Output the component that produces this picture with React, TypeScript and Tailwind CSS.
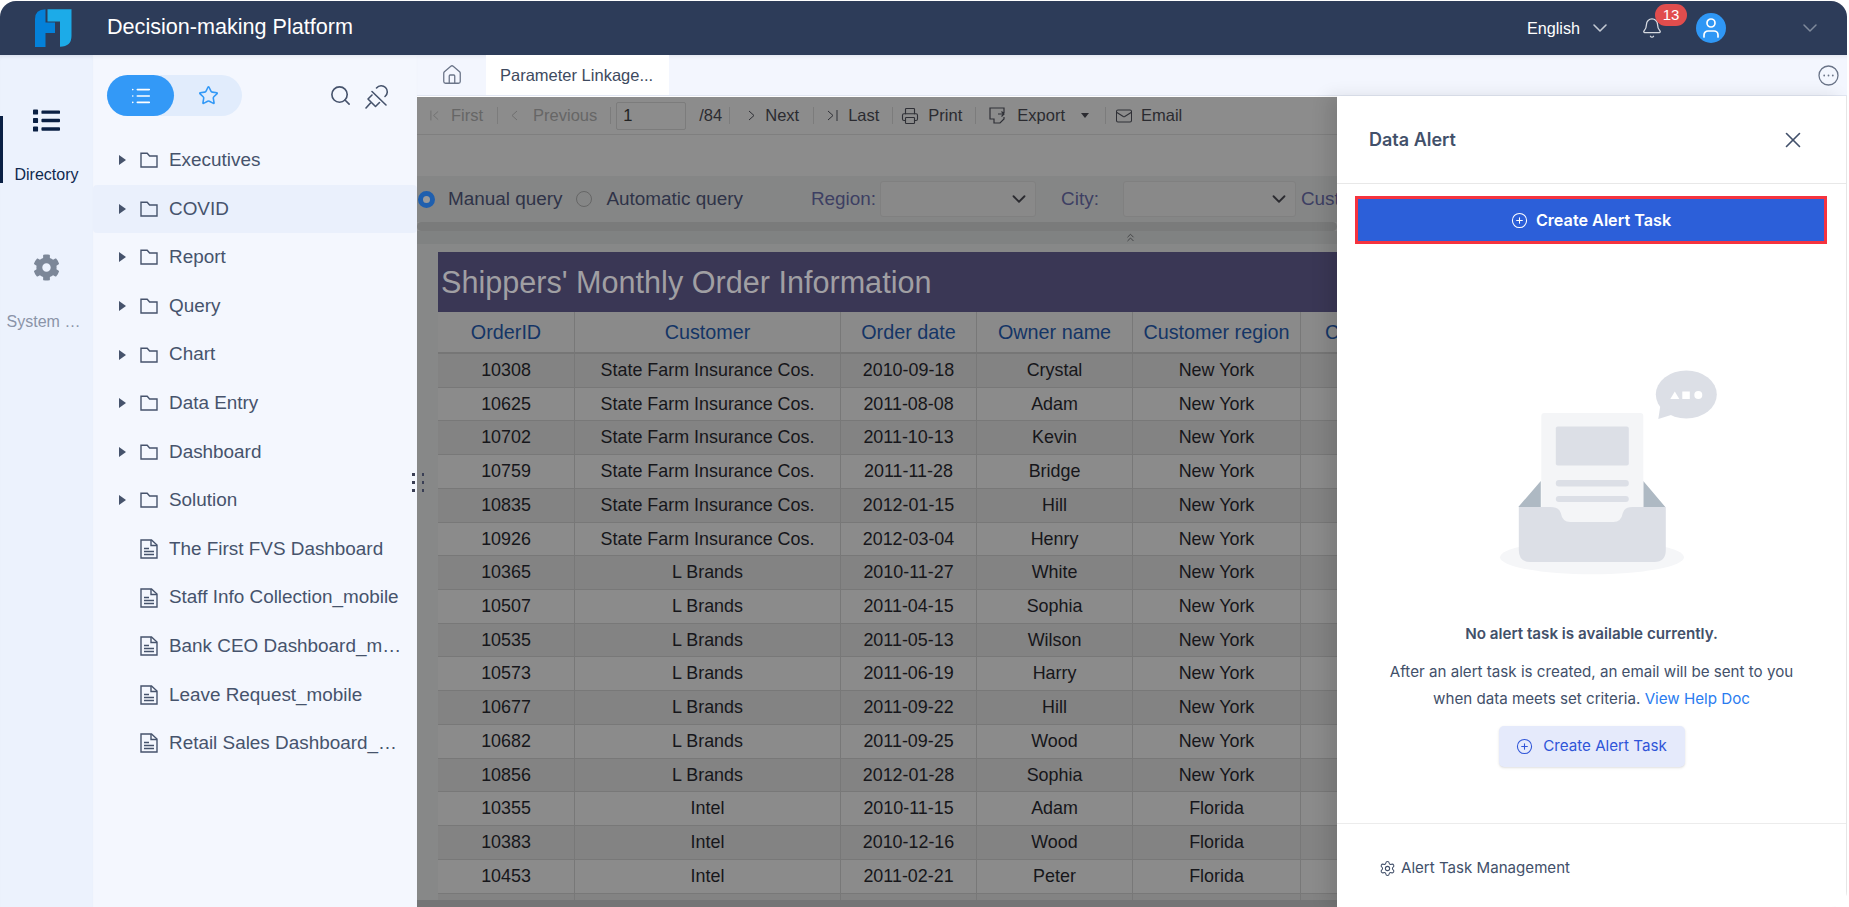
import { Bell, ChevronDown, ChevronsUp, CirclePlus, House, List, Mail, Printer, Search, Settings, Star, User, X } from "lucide-react"
import { FaCog, FaList } from "react-icons/fa"

const folders = ["Executives", "COVID", "Report", "Query", "Chart", "Data Entry", "Dashboard", "Solution"]
const files = ["The First FVS Dashboard", "Staff Info Collection_mobile", "Bank CEO Dashboard_mobile", "Leave Request_mobile", "Retail Sales Dashboard_mobile"]

const rows = [
  ["10308", "State Farm Insurance Cos.", "2010-09-18", "Crystal", "New York"],
  ["10625", "State Farm Insurance Cos.", "2011-08-08", "Adam", "New York"],
  ["10702", "State Farm Insurance Cos.", "2011-10-13", "Kevin", "New York"],
  ["10759", "State Farm Insurance Cos.", "2011-11-28", "Bridge", "New York"],
  ["10835", "State Farm Insurance Cos.", "2012-01-15", "Hill", "New York"],
  ["10926", "State Farm Insurance Cos.", "2012-03-04", "Henry", "New York"],
  ["10365", "L Brands", "2010-11-27", "White", "New York"],
  ["10507", "L Brands", "2011-04-15", "Sophia", "New York"],
  ["10535", "L Brands", "2011-05-13", "Wilson", "New York"],
  ["10573", "L Brands", "2011-06-19", "Harry", "New York"],
  ["10677", "L Brands", "2011-09-22", "Hill", "New York"],
  ["10682", "L Brands", "2011-09-25", "Wood", "New York"],
  ["10856", "L Brands", "2012-01-28", "Sophia", "New York"],
  ["10355", "Intel", "2010-11-15", "Adam", "Florida"],
  ["10383", "Intel", "2010-12-16", "Wood", "Florida"],
  ["10453", "Intel", "2011-02-21", "Peter", "Florida"],
  ["", "", "", "", ""],
]

const columns = "grid grid-cols-[137px_266px_136px_156px_168px_170px]"

function FolderIcon() {
  return (
    <svg width="18" height="16" viewBox="0 0 18 16" fill="none" stroke="#46536c" strokeWidth="1.4">
      <path d="M1 15V1.2H7.2L9.6 4H17V15Z" />
    </svg>
  )
}

function FileIcon() {
  return (
    <svg width="18" height="20" viewBox="0 0 18 20" fill="none" stroke="#46536c" strokeWidth="1.4">
      <path d="M1 19V1H11.5L17 6V19Z" />
      <path d="M11 1V6.5H17M4 9.5H9M4 12.5H14M4 15.5H14" />
    </svg>
  )
}

function Logo() {
  return (
    <svg width="37" height="38" viewBox="35 9 37 38">
      <path d="M35 47V19Q35 9.5 45.5 9.3V22.5H55V33H45.5V47Z" fill="#0481d9" />
      <path d="M47.5 9.3H71.5V36Q71.5 46.5 60 46.7V21.5H47.5Z" fill="#1cabe8" />
    </svg>
  )
}

function PinIcon() {
  return (
    <svg width="26" height="28" viewBox="4 4 26 28" fill="none" stroke="#46536c" strokeWidth="1.6" strokeLinecap="round" strokeLinejoin="round">
      <path d="M12 13.5L26 27" />
      <path d="M16.5 10C19 7 23 7 25.5 9.5C28 12 28 16 25 18.5" />
      <path d="M12 17L8 21L15.5 28.5L19.5 24.5" />
      <path d="M10.5 25L6 30" />
    </svg>
  )
}

function Illustration() {
  return (
    <svg width="260" height="205" viewBox="11.7 20 260 205">
      <ellipse cx="141.7" cy="207.3" rx="92" ry="17" fill="#f5f6f8" />
      <path d="M68 157L90.5 131V157ZM193 131L215 157H193Z" fill="#aeb9c3" />
      <rect x="91" y="63" width="102" height="115" rx="3" fill="#f4f5f7" />
      <rect x="105.5" y="76.5" width="73" height="39" rx="2" fill="#dcdfe6" />
      <rect x="105.5" y="130" width="73" height="6.5" rx="3" fill="#dcdfe6" />
      <rect x="105.5" y="146" width="73" height="6" rx="3" fill="#dcdfe6" />
      <path d="M68.5 157H100Q109 157 110.5 163Q112 172 120 172H163Q171 172 172.5 163Q174 157 182 157H215.5V200Q215.5 212 204 212H80Q68.5 212 68.5 200Z" fill="#dcdfe6" />
      <ellipse cx="236" cy="44.5" rx="30.5" ry="24" fill="#dcdfe6" />
      <path d="M210 56L208 69L224 64Z" fill="#dcdfe6" />
      <path d="M220 49H229L224.5 41.5Z" fill="#fff" />
      <rect x="232" y="41.5" width="7.5" height="7.5" fill="#fff" />
      <circle cx="248" cy="45" r="4" fill="#fff" />
    </svg>
  )
}

function Sep({ className }: { className: string }) {
  return <div className={`w-px h-[17px] bg-[#7c7c7c] shrink-0 ${className}`} />
}

function ExportIcon() {
  return (
    <svg width="16" height="17" viewBox="0 0 16 17" fill="none" stroke="#2f3036" strokeWidth="1.2">
      <path d="M15 6V1H1V12H5V16H11L15 12V10M5 12V16M9 7H15M12.5 4.5L15 7L12.5 9.5" />
    </svg>
  )
}

function Toolbar() {
  return (
    <div className="flex items-center h-[38px] shrink-0 border-b border-[#7f7f7f] text-[16.5px] whitespace-nowrap">
      <span className="ml-[13px] w-[9px] flex items-center">
        <svg width="10" height="11" viewBox="0 0 10 11" fill="none" stroke="#6f6f6f"><path d="M1 0V11M9 1L4 5.5L9 10" /></svg>
      </span>
      <span className="ml-[12px] text-[#666]">First</span>
      <Sep className="ml-[14px]" />
      <svg className="ml-[13px]" width="7" height="11" viewBox="0 0 7 11" fill="none" stroke="#6f6f6f"><path d="M6 1L1 5.5L6 10" /></svg>
      <span className="ml-[15px] text-[#666]">Previous</span>
      <Sep className="ml-[13px]" />
      <div className="ml-[5px] w-[70px] h-[28px] border border-[#7c7c7c] rounded-[2px] pl-[6px] flex items-center text-[#222]">1</div>
      <span className="ml-[13px] text-[#2b2b30]">/84</span>
      <Sep className="ml-[7px]" />
      <svg className="ml-[18px]" width="7" height="11" viewBox="0 0 7 11" fill="none" stroke="#2f3036"><path d="M1 1L6 5.5L1 10" /></svg>
      <span className="ml-[10px] text-[#2b2b30]">Next</span>
      <Sep className="ml-[14px]" />
      <svg className="ml-[13px]" width="11" height="11" viewBox="0 0 11 11" fill="none" stroke="#2f3036"><path d="M1 1L6 5.5L1 10M10 0V11" /></svg>
      <span className="ml-[10px] text-[#2b2b30]">Last</span>
      <Sep className="ml-[13px]" />
      <Printer className="ml-[8px]" size={18} strokeWidth={1.5} color="#2f3036" />
      <span className="ml-[9px] text-[#2b2b30]">Print</span>
      <Sep className="ml-[13px]" />
      <div className="ml-[13px] flex"><ExportIcon /></div>
      <span className="ml-[12px] text-[#2b2b30]">Export</span>
      <div className="ml-[16px] w-0 h-0 border-x-[4px] border-x-transparent border-t-[5px] border-t-[#2b2b30]" />
      <Sep className="ml-[16px]" />
      <Mail className="ml-[9px]" size={18} strokeWidth={1.4} color="#2f3036" />
      <span className="ml-[8px] text-[#2b2b30]">Email</span>
    </div>
  )
}

function ParamBar() {
  return (
    <div className="flex items-center h-[46px] shrink-0 mt-[41px] bg-[#858686] text-[18.9px] whitespace-nowrap">
      <div className="ml-px w-[17px] h-[17px] rounded-full border-[5px] border-[#1f5fae] bg-[#9a9a9a] shrink-0" />
      <span className="ml-[13px] text-[#2f3348]">Manual query</span>
      <div className="ml-[14px] w-[16px] h-[16px] rounded-full border border-[#666] shrink-0" />
      <span className="ml-[14px] text-[#2f3348]">Automatic query</span>
      <span className="ml-[68px] text-[#3d3f63]">Region:</span>
      <div className="ml-[4px] w-[156px] h-[36px] border border-[#808080] rounded-[3px] bg-[#898989] flex items-center justify-end pr-[5px] shrink-0">
        <ChevronDown size={22} strokeWidth={2} color="#2b2b30" />
      </div>
      <span className="ml-[25px] text-[#3d3f63]">City:</span>
      <div className="ml-[24px] w-[173px] h-[36px] border border-[#808080] rounded-[3px] bg-[#898989] flex items-center justify-end pr-[5px] shrink-0">
        <ChevronDown size={22} strokeWidth={2} color="#2b2b30" />
      </div>
      <span className="ml-[5px] text-[#3d3f63]">Customer:</span>
    </div>
  )
}

function Report() {
  return (
    <div className="flex-1 min-w-0 flex flex-col overflow-hidden bg-[#8c8c8c] mt-px">
      <Toolbar />
      <ParamBar />
      <div className="h-[9px] shrink-0 bg-[#7a7b7b] rounded-full" />
      <div className="h-[13px] shrink-0 bg-[#808282] flex items-center pl-[707px]">
        <ChevronsUp size={13} strokeWidth={1.6} color="#3a3b3d" />
      </div>
      <div className="flex-1 min-h-0 overflow-hidden bg-[#878888] pt-[8px] pl-[21px] w-[1100px]">
        <div className="h-[60px] pt-[2px] bg-[#3a3755] flex items-center pl-[3px] text-[30.6px] text-[#a09fa3] whitespace-nowrap">Shippers' Monthly Order Information</div>
        <div className={`${columns} h-[42px] border-b-2 border-[#767676] bg-[#8a8a8a] text-[19.8px] text-[#143566] text-center`}>
          {["OrderID", "Customer", "Order date", "Owner name", "Customer region", "Customer city"].map((h) => (
            <div key={h} className="border-r border-[#787878] flex items-center justify-center pt-[2px] whitespace-nowrap">{h}</div>
          ))}
        </div>
        {rows.map((row, i) => (
          <div key={i} className={`${columns} h-[33.72px] border-b border-[#787878] text-[17.9px] text-[#16161a] ${i % 2 === 0 ? "bg-[#838383]" : "bg-[#8b8b8b]"}`}>
            {row.map((cell, j) => (
              <div key={j} className="border-r border-[#787878] flex items-center justify-center">{cell}</div>
            ))}
            <div />
          </div>
        ))}
      </div>
      <div className="h-[7px] shrink-0 bg-[#747576]" />
    </div>
  )
}

function AlertPanel() {
  return (
    <div className="w-[510px] shrink-0 bg-white flex flex-col border-r border-[#e6e6e6] font-['Inter',sans-serif] text-[#42506a] shadow-[-10px_0_16px_rgba(0,0,0,0.1)] z-10">
      <div className="h-[88px] shrink-0 border-b border-[#e8e8e8] flex items-center justify-between pl-[32px] pr-[40px]">
        <span className="text-[18px] font-semibold">Data Alert</span>
        <X size={26} strokeWidth={1.5} color="#42506a" />
      </div>
      <div className="mt-[12px] ml-[18px] mr-[19px] h-[48px] border-[3px] border-[#f5333f] bg-[#2c5fd9] flex items-center justify-center gap-[8px] text-white text-[16.2px] font-semibold">
        <CirclePlus size={17} strokeWidth={1.5} />
        <span>Create Alert Task</span>
      </div>
      <div className="mt-[126px] flex justify-center">
        <Illustration />
      </div>
      <div className="mt-[49px] text-center text-[15.2px] font-semibold leading-[20px]">No alert task is available currently.</div>
      <div className="mt-[14px] text-center text-[15.15px] leading-[27px]">
        <div>After an alert task is created, an email will be sent to you</div>
        <div>when data meets set criteria. <span className="text-[#2a7cf0]">View Help Doc</span></div>
      </div>
      <div className="mt-[14px] self-center w-[186px] h-[41px] rounded-[5px] bg-[#e5eafb] shadow-sm flex items-center justify-center gap-[10px] text-[#2f55d8] text-[15.15px]">
        <CirclePlus size={17} strokeWidth={1.5} />
        <span>Create Alert Task</span>
      </div>
      <div className="mt-[56px] border-t border-[#ececec] flex-1 flex items-center pl-[42px] gap-[5px] text-[15.1px] pt-[6px]">
        <Settings size={17} strokeWidth={1.5} />
        <span>Alert Task Management</span>
      </div>
    </div>
  )
}

export default function App() {
  return (
    <div className="w-[1849px] h-[907px] bg-white pt-px pr-[2px] overflow-hidden font-['Liberation_Sans',Arial,sans-serif]">
      <div className="relative h-full flex flex-col rounded-t-[16px] rounded-br-[16px] overflow-hidden">
        <header className="h-[54px] shrink-0 bg-[#2d3c59] flex items-center text-white z-20">
          <div className="ml-[35px] flex"><Logo /></div>
          <span className="ml-[35px] text-[21.6px] mt-[-2px]">Decision-making Platform</span>
          <span className="ml-auto text-[16.2px]">English</span>
          <ChevronDown className="ml-[8px]" size={24} strokeWidth={1.6} color="#c3c9d3" />
          <div className="relative ml-[29px] w-[24px]">
            <Bell size={22} strokeWidth={1.4} color="#d5d9e0" />
            <div className="absolute left-[14px] top-[-13px] w-[32px] h-[22px] rounded-full bg-[#e14d4d] text-center text-[15px] leading-[22px]">13</div>
          </div>
          <div className="ml-[31px] w-[30px] h-[30px] rounded-full bg-[#2f97f5] flex items-center justify-center">
            <User size={24} strokeWidth={1.7} color="#fff" />
          </div>
          <ChevronDown className="ml-[72px] mr-[25px]" size={24} strokeWidth={1.5} color="#7f8a9c" />
        </header>
        <div className="flex-1 min-h-0 flex">
          <aside className="w-[93px] shrink-0 bg-[#ecf2fd] flex flex-col items-center shadow-[inset_0_4px_4px_-3px_rgba(45,60,89,0.12)]">
            <div className="relative mt-[61px] w-full h-[67px] flex flex-col items-center">
              <div className="absolute left-0 top-0 w-[3px] h-full bg-[#0a2044]" />
              <div className="mt-[-9px]"><FaList size={27} color="#0a2044" /></div>
              <span className="mt-[29px] text-[16px] text-[#10294e]">Directory</span>
            </div>
            <div className="mt-[71px]"><FaCog size={27} color="#7c8798" /></div>
            <span className="mt-[29px] ml-[-6px] text-[16px] text-[#8a94a8]">System …</span>
          </aside>
          <nav className="w-[324px] shrink-0 bg-[#f4f7fe] text-[#46536c] text-[18.9px] shadow-[inset_0_4px_4px_-3px_rgba(45,60,89,0.1)]">
            <div className="flex items-center mt-[20px] pl-[14px]">
              <div className="flex w-[135px] h-[41px] rounded-full bg-[#e1ecfc]">
                <div className="w-[67px] h-full rounded-full bg-[#3399f7] flex items-center justify-center">
                  <List size={22} strokeWidth={1.8} color="#fff" />
                </div>
                <div className="flex-1 flex items-center justify-center">
                  <Star size={21} strokeWidth={1.8} color="#3399f7" />
                </div>
              </div>
              <Search className="ml-[87px]" size={23} strokeWidth={1.7} color="#46536c" />
              <div className="ml-[12px] flex"><PinIcon /></div>
            </div>
            <div className="mt-[20px]">
              {folders.map((name) => (
                <div key={name} className={`h-[48.6px] flex items-center rounded-[4px] ${name === "COVID" ? "bg-[#eaf0fc]" : ""}`}>
                  <div className="ml-[26px] w-0 h-0 border-y-[5px] border-y-transparent border-l-[7px] border-l-[#46536c]" />
                  <div className="ml-[14px] flex"><FolderIcon /></div>
                  <span className="ml-[11px]">{name}</span>
                </div>
              ))}
              {files.map((name) => (
                <div key={name} className="h-[48.6px] flex items-center">
                  <div className="ml-[47px] flex shrink-0"><FileIcon /></div>
                  <span className="ml-[11px] w-[234px] truncate">{name}</span>
                </div>
              ))}
            </div>
          </nav>
          <div className="flex-1 min-w-0 flex flex-col">
            <div className="h-[41px] shrink-0 bg-[#f3f6fe] border-b border-[#e1e6f2] flex text-[16.5px] text-[#3e4a5e] shadow-[inset_0_4px_4px_-3px_rgba(45,60,89,0.1)]">
              <div className="w-[69px] flex items-center justify-center">
                <House size={22} strokeWidth={1.4} color="#6a7488" />
              </div>
              <div className="w-[183px] bg-white flex items-center pl-[14px]">Parameter Linkage...</div>
              <div className="ml-auto mr-[8px] flex items-center">
                <svg width="21" height="21" viewBox="0 0 21 21" fill="none" stroke="#6a7488" strokeWidth="1.3">
                  <circle cx="10.5" cy="10.5" r="9.5" />
                  <circle cx="6.2" cy="10.5" r="0.9" fill="#6a7488" stroke="none" />
                  <circle cx="10.5" cy="10.5" r="0.9" fill="#6a7488" stroke="none" />
                  <circle cx="14.8" cy="10.5" r="0.9" fill="#6a7488" stroke="none" />
                </svg>
              </div>
            </div>
            <div className="flex-1 min-h-0 flex">
              <Report />
              <AlertPanel />
            </div>
          </div>
          <div className="absolute left-[412px] top-[472px] grid grid-cols-2 gap-x-[7px] gap-y-[5.5px] z-10">
            {[0, 1, 2, 3, 4, 5].map((d) => (
              <div key={d} className="w-[2.5px] h-[2.5px] bg-[#3a3f55]" />
            ))}
          </div>
        </div>
      </div>
    </div>
  )
}
